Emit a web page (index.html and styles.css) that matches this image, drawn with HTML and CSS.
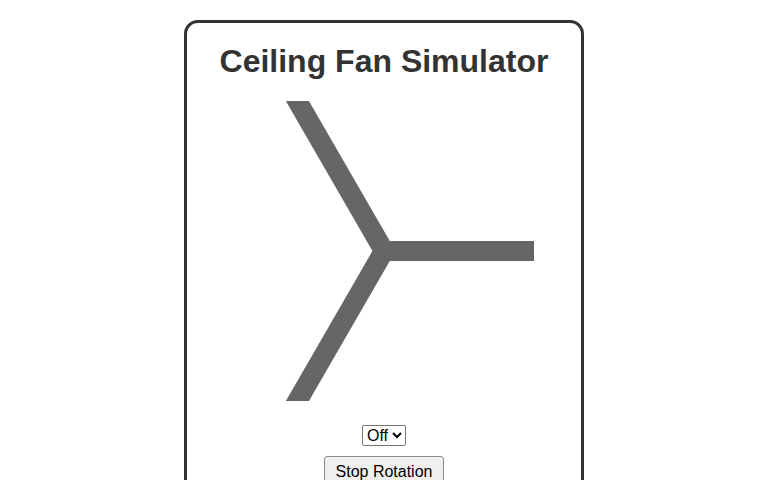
FILE: index.html
```html
<!DOCTYPE html>
<html lang="en">
<head>
<meta charset="utf-8">
<title>Ceiling Fan Simulator</title>
<link rel="stylesheet" href="styles.css">
</head>
<body>
<div class="card">
  <h1 class="title">Ceiling Fan Simulator</h1>
  <div class="fan">
    <svg class="fan-svg" width="300" height="300" viewBox="0 0 300 300">
      <g fill="#666666">
        <rect x="150" y="140" width="300" height="20"/>
        <rect x="150" y="140" width="300" height="20" transform="rotate(120 150 150)"/>
        <rect x="150" y="140" width="300" height="20" transform="rotate(240 150 150)"/>
      </g>
    </svg>
  </div>
  <div class="controls">
    <select class="speed">
      <option>Off</option>
      <option>1</option>
      <option>2</option>
      <option>3</option>
    </select>
  </div>
  <div class="actions">
    <button class="toggle">Stop Rotation</button>
  </div>
</div>
</body>
</html>
```
FILE: styles.css
```css
html, body {
  margin: 0;
  padding: 0;
  background: #ffffff;
}
body {
  font-family: "Liberation Sans", Arial, sans-serif;
  color: #333333;
  padding-top: 20px;
}
.card {
  box-sizing: border-box;
  width: 400px;
  margin: 0 auto;
  border: 3px solid #333333;
  border-radius: 14px;
  padding: 20px;
  text-align: center;
}
.title {
  margin: 0 0 21px;
  font-size: 32px;
  font-weight: bold;
  line-height: 37px;
  color: #333333;
}
.fan {
  width: 300px;
  height: 300px;
  margin: 0 auto;
  overflow: hidden;
}
.fan-svg {
  display: block;
}
.controls {
  margin-top: 24px;
  height: 21px;
  display: flex;
  justify-content: center;
  align-items: flex-start;
}
.speed {
  font-family: "Liberation Sans", Arial, sans-serif;
  font-size: 16px;
}
.actions {
  margin-top: 10px;
  display: flex;
  justify-content: center;
}
.toggle {
  font-family: "Liberation Sans", Arial, sans-serif;
  font-size: 16px;
  padding: 6px 11px 5px;
  border: 1px solid #8f8f8f;
  border-radius: 3px;
  background: #efefef;
  color: #000000;
  line-height: 18px;
}
```
